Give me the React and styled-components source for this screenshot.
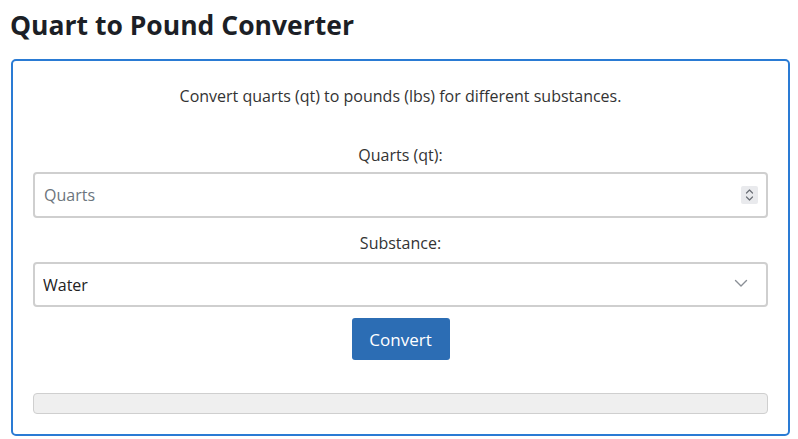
import React from 'react'
import styled, { createGlobalStyle } from 'styled-components'

const GlobalStyle = createGlobalStyle`
    body {
        margin: 0;
        background: #fff;
        font-family: "Open Sans", "Noto Sans", sans-serif;
        color: #212529;
    }
`

const Page = styled.div`
    padding: 6px 8px 0 11px;
`

const Title = styled.h1`
    margin: 0 0 15px -1px;
    font-size: 26.5px;
    line-height: 38px;
    font-weight: 700;
    color: #1c1f26;
`

const Card = styled.div`
    border: 2px solid #2a7bd4;
    border-radius: 5px;
    padding: 20px 20px 20px;
    display: flex;
    flex-direction: column;
    align-items: stretch;
`

const Intro = styled.p`
    margin: 3px 0 35px;
    text-align: center;
    font-size: 16px;
    line-height: 24px;
    color: #333;
`

const Label = styled.label`
    display: block;
    text-align: center;
    font-size: 16px;
    line-height: 24px;
    color: #333;
    margin-bottom: ${props => props.gap}px;
`

const Field = styled.div`
    position: relative;
    margin-bottom: ${props => props.gap}px;
`

const TextInput = styled.input`
    box-sizing: border-box;
    width: 100%;
    height: ${props => props.h}px;
    padding: 0 9px;
    border: 2px solid #cfcfcf;
    border-radius: 4px;
    font: inherit;
    font-size: 16px;
    color: #333;
    background: #fff;
    outline: none;
    appearance: textfield;

    &::placeholder {
        color: #6c757d;
    }

    &::-webkit-inner-spin-button,
    &::-webkit-outer-spin-button {
        -webkit-appearance: none;
        margin: 0;
    }
`

const Select = styled.select`
    box-sizing: border-box;
    width: 100%;
    height: 45px;
    padding: 0 8px;
    border: 2px solid #cfcfcf;
    border-radius: 4px;
    font: inherit;
    font-size: 16px;
    color: #222;
    background: #fff;
    appearance: none;
    outline: none;
`

const Spinner = styled.span`
    position: absolute;
    right: 10px;
    top: 14px;
    width: 17px;
    height: 18px;
    background: #e9eaed;
    border-radius: 2px;
    display: flex;
    align-items: center;
    justify-content: center;
    pointer-events: none;
`

const Chevron = styled.span`
    position: absolute;
    right: 20px;
    top: 17px;
    display: flex;
    pointer-events: none;
`

const ButtonRow = styled.div`
    display: flex;
    justify-content: center;
    margin-bottom: 33px;
`

const Button = styled.button`
    width: 98px;
    height: 42px;
    border: none;
    border-radius: 3px;
    background: #2c6db4;
    color: #fff;
    font: inherit;
    font-size: 17px;
    cursor: pointer;
`

const Progress = styled.div`
    box-sizing: border-box;
    height: 21px;
    border: 1px solid #cfcfcf;
    border-radius: 4px;
    background: #efefef;
`

export default function App() {
    return (
        <Page>
            <GlobalStyle />
            <Title>Quart to Pound Converter</Title>
            <Card>
                <Intro>Convert quarts (qt) to pounds (lbs) for different substances.</Intro>
                <Label htmlFor="quarts" gap={5}>Quarts (qt):</Label>
                <Field gap={13}>
                    <TextInput id="quarts" type="number" placeholder="Quarts" h={46} />
                    <Spinner>
                        <svg width="11" height="14" viewBox="0 0 11 14" fill="none" stroke="#6b6f76" strokeWidth="1.2" strokeLinecap="round" strokeLinejoin="round">
                            <polyline points="2.5,5 5.5,2 8.5,5" />
                            <polyline points="2.5,9 5.5,12 8.5,9" />
                        </svg>
                    </Spinner>
                </Field>
                <Label htmlFor="substance" gap={7}>Substance:</Label>
                <Field gap={11}>
                    <Select id="substance" defaultValue="water">
                        <option value="water">Water</option>
                        <option value="milk">Milk</option>
                        <option value="oil">Oil</option>
                    </Select>
                    <Chevron>
                        <svg width="14" height="9" viewBox="0 0 14 9" fill="none" stroke="#8a8f96" strokeWidth="1.4" strokeLinecap="round" strokeLinejoin="round">
                            <polyline points="1.5,1.5 7,7 12.5,1.5" />
                        </svg>
                    </Chevron>
                </Field>
                <ButtonRow>
                    <Button>Convert</Button>
                </ButtonRow>
                <Progress />
            </Card>
        </Page>
    )
}
